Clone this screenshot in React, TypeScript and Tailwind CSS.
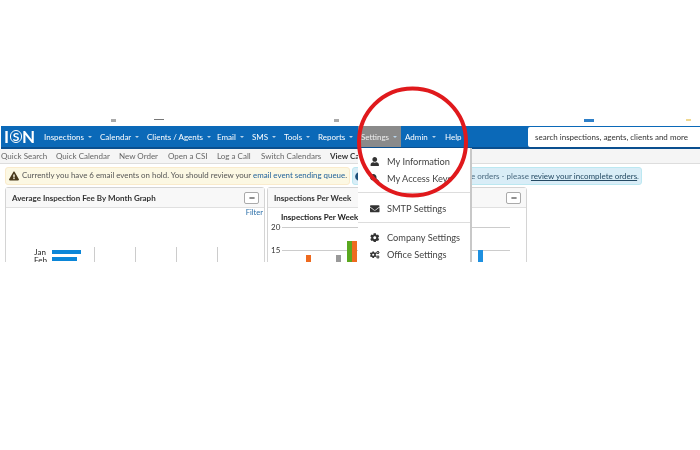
import React from "react";
import { FaUser, FaKey, FaEnvelope, FaCog, FaCogs, FaExclamationTriangle, FaInfoCircle, FaMinus } from "react-icons/fa";

const nav: [string, string][] = [
  ["Inspections", "w-[56px]"],
  ["Calendar", "w-[47px]"],
  ["Clients / Agents", "w-[70px]"],
  ["Email", "w-[35px]"],
  ["SMS", "w-[32px]"],
  ["Tools", "w-[34px]"],
  ["Reports", "w-[40px]"],
];
const sub: [string, string][] = [
  ["Quick Search", "w-[55px]"],
  ["Quick Calendar", "w-[63px]"],
  ["New Order", "w-[49px]"],
  ["Open a CSI", "w-[49px]"],
  ["Log a Call", "w-[44px]"],
  ["Switch Calendars", "w-[69px]"],
];

function Caret() {
  return <span className="ml-[4px] inline-block w-0 h-0 border-x-[2px] border-t-[2px] border-x-transparent border-t-[#b9d4ea] align-middle" />;
}

function MenuItem({ icon, label }: { icon: React.ReactNode; label: string }) {
  return (
    <div className="flex items-center h-[17px] pl-[12px] text-[9.25px] text-[#444] whitespace-nowrap">
      <span className="w-[17px] flex text-[#333] text-[9.5px]">{icon}</span>
      {label}
    </div>
  );
}

function Panel({ title, width, children }: { title: string; width: string; children: React.ReactNode }) {
  return (
    <div className={`${width} h-[80px] border border-[#d4d4d4] rounded-t-[3px] shrink-0`}>
      <div className="h-[20px] flex items-center justify-between pl-[6px] pr-[5px] bg-[#f8f8f8] border-b border-[#e0e0e0] text-[8px] font-bold text-[#333]">
        {title}
        <span className="w-[15px] h-[12px] bg-white border border-[#aaa] rounded-[2px] flex items-center justify-center text-[#222] text-[6px]"><FaMinus /></span>
      </div>
      {children}
    </div>
  );
}

export default function App() {
  return (
    <div className="relative w-[700px] h-[450px] bg-white overflow-hidden font-['Lato',sans-serif] blur-[0.35px]">
      <div className="h-[118px]" />
      <div className="h-[8px] flex items-start">
        <span className="ml-[111px] mt-[1px] w-[5px] h-[3px] bg-[#aaa]" />
        <span className="ml-[38px] mt-[1px] w-[10px] h-[1px] bg-[#777]" />
        <span className="ml-[170px] mt-[1px] w-[5px] h-[3px] bg-[#aaa]" />
        <span className="ml-[245px] mt-[1px] w-[10px] h-[3px] bg-[#2f80c8]" />
        <span className="ml-[92px] mt-[1px] w-[5px] h-[2px] bg-[#f0d890]" />
      </div>

      <div className="ml-[1px] h-[23px] flex items-stretch bg-[#0b69b8] text-white text-[8px] border-b-2 border-[#0a4f8f]">
        <div className="w-[43px] shrink-0 pl-[3px] flex items-center text-[17px] leading-none font-bold">
          I
          <span className="ml-[1px] w-[12px] h-[13px] rounded-full border border-white flex items-center justify-center text-[12px]">S</span>
          <span>N</span>
        </div>
        {nav.map(([t, w]) => (
          <div key={t} className={`${w} shrink-0 flex items-center whitespace-nowrap`}>{t}<Caret /></div>
        ))}
        <div className="w-[43px] shrink-0 bg-[#8a8a8a] flex items-center pl-[3px] text-[#eee]">Settings<Caret /></div>
        <div className="w-[40px] shrink-0 pl-[4px] flex items-center">Admin<Caret /></div>
        <div className="w-[87px] shrink-0 pl-[4px] flex items-center">Help</div>
        <div className="flex-1 min-w-0 overflow-hidden bg-white rounded-l-[2px] mt-[1px] flex items-center pl-[7px] text-[#333] whitespace-nowrap text-[8px]">search inspections, agents, clients and more</div>
      </div>

      <div className="h-[15px] flex items-center bg-[#f5f5f5] border-b border-[#ddd] pl-[1px] text-[8px] text-[#666]">
        {sub.map(([t, w]) => <span key={t} className={`${w} whitespace-nowrap`}>{t}</span>)}
        <span className="font-bold text-[#333]">View Calendar</span>
      </div>

      <div className="flex gap-[2px] pl-[5px] mt-[3px] h-[18px] text-[8px]">
        <div className="w-[345px] flex items-center gap-[3px] bg-[#fcf8e3] border border-[#faebcc] rounded-[3px] pl-[3px] text-[#555] text-[7.9px] whitespace-nowrap overflow-hidden">
          <FaExclamationTriangle className="text-[#4a3a1c] text-[10px] shrink-0" />
          <span>Currently you have 6 email events on hold. You should review your <span className="text-[#1d5f99]">email event sending queue</span>.</span>
        </div>
        <div className="w-[290px] flex items-center bg-[#d9edf7] border border-[#bce8f1] rounded-[3px] pl-[2px] text-[#4a6a80] whitespace-nowrap overflow-hidden">
          <FaInfoCircle className="text-[#1d4f7a] text-[9px] shrink-0" />
          <span className="flex-1 text-right pr-[2px]">You have incomplete orders - please <span className="underline text-[#244a63]">review your incomplete orders</span>.</span>
        </div>
      </div>

      <div className="flex gap-[2px] pl-[5px] mt-[2px] h-[75px] overflow-hidden">
        <Panel title="Average Inspection Fee By Month Graph" width="w-[260px]">
          <div className="text-right pr-[1px] text-[7.5px] text-[#2a6ea8] leading-[10px]">Filter</div>
          <div className="flex mt-[29px] pl-[28px]">
            <div className="w-[18px] text-right pr-[6px] text-[8px] leading-[8px] text-[#222] pt-[1px]">
              <div>Jan</div><div>Feb</div>
            </div>
            <div className="w-[42px] pt-[3px]">
              <div className="w-[29px] h-[4px] bg-[#0b86d8]" />
              <div className="w-[25px] h-[4px] bg-[#0b86d8] mt-[3px]" />
            </div>
            <div className="flex">
              <div className="w-[41px] h-[20px] border-l border-[#ccc]" />
              <div className="w-[41px] h-[20px] border-l border-[#ccc]" />
              <div className="w-[41px] h-[20px] border-l border-[#ccc]" />
              <div className="w-[41px] h-[20px] border-l border-[#ccc]" />
            </div>
          </div>
        </Panel>
        <Panel title="Inspections Per Week" width="w-[260px]">
          <div className="pl-[13px] pt-[4px] text-[8px] font-bold text-[#222] leading-[10px] whitespace-nowrap">Inspections Per Week (Last 12 Weeks)</div>
          <div className="flex flex-col text-[8px] text-[#333] leading-[10px] pl-[3px]">
            <div className="flex items-center h-[10px]"><span className="w-[11px]">20</span><span className="w-[228px] h-px bg-[#ccc]" /></div>
            <div className="flex items-center h-[10px] mt-[13px]"><span className="w-[11px]">15</span><span className="w-[228px] h-px bg-[#ccc]" /></div>
          </div>
          <div className="flex items-start pl-[38px] h-[10px]">
            <span className="w-[5px] h-[10px] bg-[#ee6a1f]" />
            <span className="ml-[25px] w-[5px] h-[10px] bg-[#999]" />
            <span className="ml-[6px] -mt-[14px] w-[5px] h-[24px] bg-[#5aa81f]" />
            <span className="-mt-[14px] w-[5px] h-[24px] bg-[#ee6a1f]" />
            <span className="ml-[121px] -mt-[5px] w-[5px] h-[15px] bg-[#1e90e0]" />
          </div>
        </Panel>
      </div>

      <div className="absolute left-[358px] top-[148px] w-[114px] h-[114px] bg-white border-r-2 border-[#c8c8c8] overflow-hidden pt-[5px]">
        <MenuItem icon={<FaUser />} label="My Information" />
        <MenuItem icon={<FaKey className="-scale-x-100" />} label="My Access Keys" />
        <div className="h-px bg-[#ddd] mt-[5px] mb-[7px]" />
        <MenuItem icon={<FaEnvelope />} label="SMTP Settings" />
        <div className="h-px bg-[#ddd] mt-[5px] mb-[6px]" />
        <MenuItem icon={<FaCog />} label="Company Settings" />
        <MenuItem icon={<FaCogs />} label="Office Settings" />
      </div>

      <svg className="absolute left-[350px] top-[80px]" width="125" height="125" viewBox="0 0 125 125">
        <circle cx="62.5" cy="62" r="53.5" fill="none" stroke="#e0191c" strokeWidth="4" />
      </svg>
    </div>
  );
}
